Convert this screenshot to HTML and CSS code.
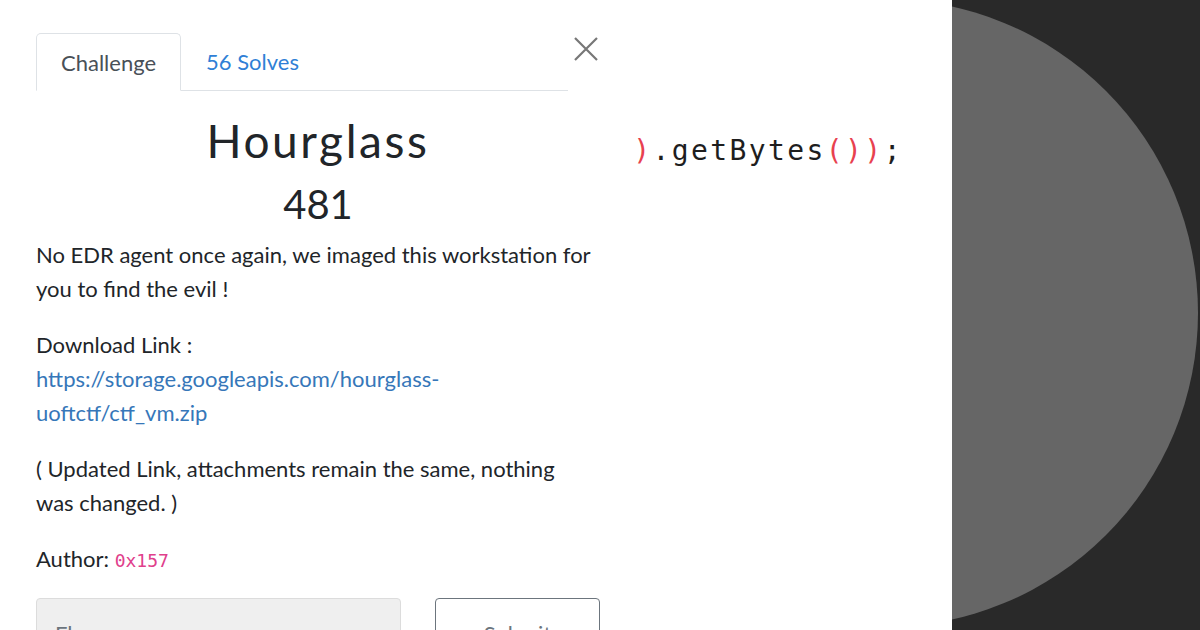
FILE: index.html
```html
<!DOCTYPE html>
<html lang="en">
<head>
<meta charset="utf-8">
<title>Hourglass</title>
<link rel="stylesheet" href="styles.css">
</head>
<body>
<div class="page">
  <main class="stage">
    <pre class="code"><span class="str">"</span><span class="paren">)</span>.getBytes<span class="paren">())</span>;</pre>
    <section class="modal">
      <header class="modal-head">
        <nav class="tabs">
          <a class="tab active">Challenge</a>
          <a class="tab">56 Solves</a>
        </nav>
        <button class="close" aria-label="Close">
          <svg width="26" height="24" viewBox="0 0 26 24"><path d="M2 1 L24 23 M24 1 L2 23" stroke="#777" stroke-width="2.2" fill="none"/></svg>
        </button>
      </header>
      <h1 class="title">Hourglass</h1>
      <div class="value">481</div>
      <div class="desc">
        <p>No EDR agent once again, we imaged this workstation for you to find the evil !</p>
        <p>Download Link :<br><a class="link" href="#">https://storage.googleapis.com/hourglass-<br>uoftctf/ctf_vm.zip</a></p>
        <p>( Updated Link, attachments remain the same, nothing was changed. )</p>
        <p>Author: <code class="author">0x157</code></p>
      </div>
      <form class="submit-row">
        <input class="flag" type="text" placeholder="Flag">
        <button class="submit" type="button">Submit</button>
      </form>
    </section>
  </main>
  <aside class="side">
    <div class="disc"></div>
  </aside>
</div>
</body>
</html>
```

FILE: styles.css
```css
html, body {
  margin: 0;
  padding: 0;
  width: 1200px;
  height: 630px;
  overflow: hidden;
  background: #fff;
}

.page {
  display: flex;
  width: 1200px;
  height: 630px;
}

.stage {
  position: relative;
  width: 952px;
  height: 630px;
  background: #fff;
  overflow: hidden;
}

.code {
  margin: 0;
  padding: 131px 0 0 614px;
  font-family: "DejaVu Sans Mono", monospace;
  font-size: 28px;
  letter-spacing: 2.4px;
  color: #1e1e1e;
  line-height: 40px;
}

.code .paren, .code .str {
  color: #e8414f;
}

.modal {
  position: absolute;
  left: 0;
  top: 0;
  width: 631px;
  height: 630px;
  box-sizing: border-box;
  padding: 33px 31px 0 36px;
  background: #fff;
  font-family: Lato, "Open Sans", sans-serif;
  color: #212529;
  overflow: hidden;
}

.modal-head {
  display: flex;
  align-items: flex-start;
}

.tabs {
  display: flex;
  width: 532px;
  height: 57px;
  border-bottom: 1px solid #dee2e6;
}

.tab {
  display: flex;
  align-items: center;
  height: 57px;
  box-sizing: border-box;
  padding: 0 24px;
  font-size: 22px;
  color: #2f7fd6;
  border: 1px solid transparent;
  border-radius: 5px 5px 0 0;
  margin-bottom: -1px;
}

.tab.active {
  color: #495057;
  background: #fff;
  border-color: #dee2e6 #dee2e6 #fff;
  height: 58px;
}

.close {
  margin: 4px 0 0 4px;
  padding: 0;
  width: 28px;
  height: 24px;
  border: 0;
  background: none;
  display: flex;
  align-items: center;
  justify-content: center;
}

.title {
  margin: 22px 0 0;
  text-align: center;
  font-weight: 400;
  font-size: 46px;
  line-height: 55px;
  letter-spacing: 2.6px;
  color: #212529;
}

.value {
  text-align: center;
  font-size: 40px;
  line-height: 48px;
  margin-top: 12px;
  color: #212529;
}

.desc {
  margin-top: 10px;
  padding-right: 5px;
  font-size: 22px;
  line-height: 34px;
}

.desc p {
  margin: 0 0 22px;
}

.desc p:last-child {
  margin-bottom: 0;
}

.link {
  color: #3677b9;
  text-decoration: none;
}

.author {
  font-family: "DejaVu Sans Mono", monospace;
  font-size: 18px;
  color: #e0408c;
}

.submit-row {
  display: flex;
  justify-content: space-between;
  align-items: flex-start;
  margin-top: 20px;
}

.flag {
  width: 365px;
  height: 70px;
  box-sizing: border-box;
  border: 1px solid #dcdcdc;
  border-radius: 4px;
  background: #efefef;
  padding: 0 18px;
  font-family: Lato, sans-serif;
  font-size: 22px;
  color: #555;
}

.flag::placeholder {
  color: #6c757d;
}

.submit {
  width: 165px;
  height: 70px;
  box-sizing: border-box;
  border: 1px solid #6c757d;
  border-radius: 4px;
  background: #fff;
  padding: 0;
  font-family: Lato, sans-serif;
  font-size: 22px;
  color: #6c757d;
}

.side {
  position: relative;
  width: 248px;
  height: 630px;
  background: #292929;
  overflow: hidden;
}

.disc {
  position: absolute;
  left: -382px;
  top: -1px;
  width: 628px;
  height: 628px;
  border-radius: 50%;
  background: #666;
}
```
